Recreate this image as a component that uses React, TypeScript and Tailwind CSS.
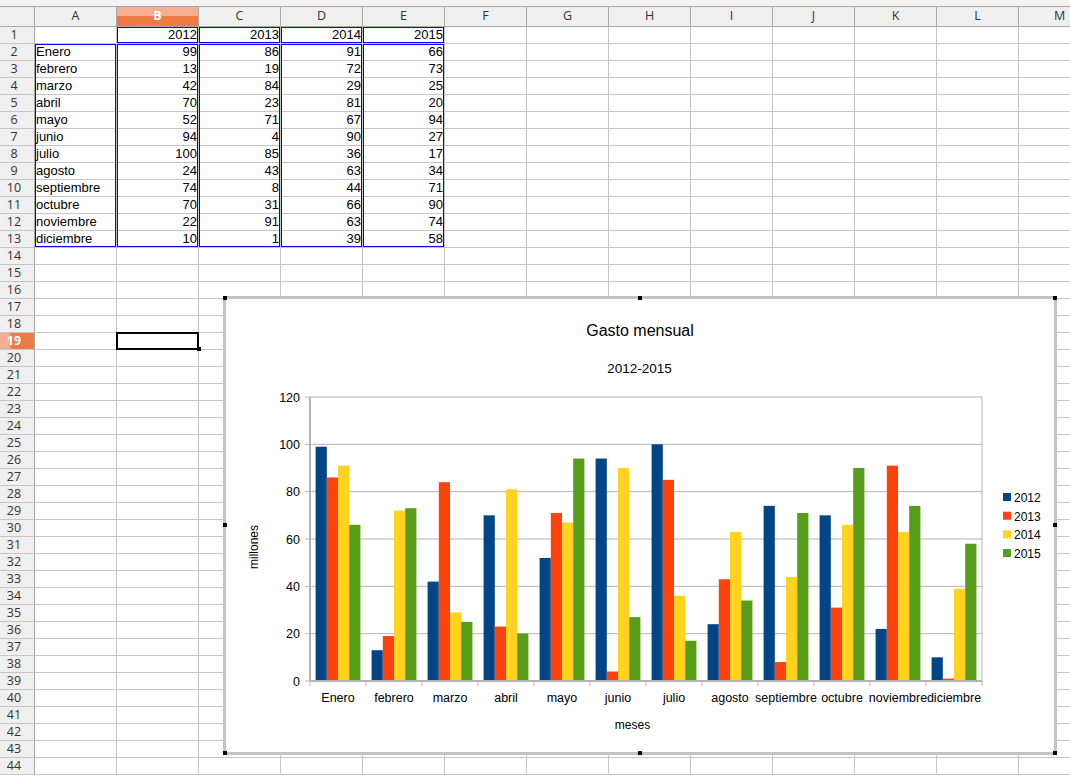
import React from 'react';

const COLS = ['A', 'B', 'C', 'D', 'E', 'F', 'G', 'H', 'I', 'J', 'K', 'L', 'M'];
const MONTHS = ['Enero', 'febrero', 'marzo', 'abril', 'mayo', 'junio', 'julio', 'agosto', 'septiembre', 'octubre', 'noviembre', 'diciembre'];
const DATA = [
  [99, 86, 91, 66],
  [13, 19, 72, 73],
  [42, 84, 29, 25],
  [70, 23, 81, 20],
  [52, 71, 67, 94],
  [94, 4, 90, 27],
  [100, 85, 36, 17],
  [24, 43, 63, 34],
  [74, 8, 44, 71],
  [70, 31, 66, 90],
  [22, 91, 63, 74],
  [10, 1, 39, 58],
];
const YEARS = ['2012', '2013', '2014', '2015'];
const COLORS = ['#004586', '#ff420e', '#ffd320', '#579d1c'];
const ROWS = Array.from({ length: 44 }, (_, i) => i + 1);

function cellContent(r: number, c: number): { text: string; right: boolean } | null {
  if (r === 1) {
    if (c >= 1 && c <= 4) return { text: YEARS[c - 1], right: true };
    return null;
  }
  if (r >= 2 && r <= 13) {
    if (c === 0) return { text: MONTHS[r - 2], right: false };
    if (c <= 4) return { text: String(DATA[r - 2][c - 1]), right: true };
  }
  return null;
}

const X0 = 310;
const X1 = 982;
const YTOP = 397;
const YBASE = 681;
const CAT = 56;
const BAR = 11.2;
const yv = (v: number) => YBASE - (v * (YBASE - YTOP)) / 120;

function Chart() {
  const grid = [20, 40, 60, 80, 100, 120];
  const labels = [0, 20, 40, 60, 80, 100, 120];
  return (
    <svg
      className="block font-['Liberation_Sans',Arial,sans-serif]"
      width={828}
      height={453}
      viewBox="226 299 828 453"
    >
      <text x={640} y={336} textAnchor="middle" fontSize={16} fill="#000">
        Gasto mensual
      </text>
      <text x={639.5} y={373} textAnchor="middle" fontSize={13.5} fill="#000">
        2012-2015
      </text>

      {grid.map((v) => (
        <line key={v} x1={X0} x2={X1} y1={yv(v)} y2={yv(v)} stroke="#b3b3b3" strokeWidth={1} />
      ))}
      {labels.map((v) => (
        <line key={'t' + v} x1={305} x2={X0} y1={yv(v)} y2={yv(v)} stroke="#b3b3b3" strokeWidth={1} />
      ))}
      {Array.from({ length: 13 }, (_, i) => (
        <line key={'xt' + i} x1={X0 + CAT * i} x2={X0 + CAT * i} y1={YBASE} y2={686} stroke="#b3b3b3" strokeWidth={1} />
      ))}

      {DATA.map((row, i) =>
        row.map((v, j) => (
          <rect
            key={i + '-' + j}
            x={X0 + CAT * i + BAR / 2 + BAR * j}
            y={yv(v)}
            width={BAR}
            height={YBASE - yv(v)}
            fill={COLORS[j]}
          />
        ))
      )}

      <line x1={X0} x2={X0} y1={YTOP} y2={YBASE} stroke="#b3b3b3" strokeWidth={2} />
      <line x1={X1} x2={X1} y1={YTOP} y2={YBASE} stroke="#b3b3b3" strokeWidth={1} />
      <line x1={X0} x2={X1} y1={YBASE} y2={YBASE} stroke="#b3b3b3" strokeWidth={2} />

      {labels.map((v) => (
        <text key={'l' + v} x={300} y={yv(v) + 4.5} textAnchor="end" fontSize={12.5} fill="#000">
          {v}
        </text>
      ))}
      {MONTHS.map((m, i) => (
        <text key={m} x={X0 + CAT * i + CAT / 2} y={702} textAnchor="middle" fontSize={12.5} fill="#000">
          {m}
        </text>
      ))}

      <text x={258} y={547} textAnchor="middle" fontSize={12} fill="#000" transform="rotate(-90 258 547)">
        millones
      </text>
      <text x={632.5} y={729} textAnchor="middle" fontSize={12} fill="#000">
        meses
      </text>

      {YEARS.map((y, i) => {
        const top = 493 + i * 18.7;
        return (
          <g key={y}>
            <rect x={1003} y={top} width={8} height={8} fill={COLORS[i]} />
            <text x={1014} y={top + 9} fontSize={12} fill="#000">
              {y}
            </text>
          </g>
        );
      })}
    </svg>
  );
}

function Handle({ x, y }: { x: string; y: string }) {
  return <div className={`absolute h-[4px] w-[4px] bg-black ${x} ${y}`} />;
}

export default function App() {
  return (
    <div className="relative h-[777px] w-[1070px] overflow-hidden bg-white font-['Liberation_Sans',Arial,sans-serif]">
      <div className="h-[6px] bg-[#f4f3f2]" />

      {/* column header */}
      <div className="flex h-[21px] border-y border-[#a9a9a9] bg-[#efefef] font-['Open_Sans',sans-serif] text-[12.5px] text-[#333]">
        <div className="w-[35px] shrink-0 border-r border-[#a9a9a9]" />
        {COLS.map((c) => (
          <div
            key={c}
            className={
              c === 'B'
                ? 'flex w-[82px] shrink-0 items-center justify-center border-r border-[#a9a9a9] bg-linear-to-b from-[#f6ae91] from-45% to-[#ee7a45] to-50% font-bold text-white'
                : 'flex w-[82px] shrink-0 items-center justify-center border-r border-[#a9a9a9]'
            }
          >
            {c}
          </div>
        ))}
      </div>

      {/* rows */}
      {ROWS.map((r) => (
        <div key={r} className="flex h-[17px]">
          <div
            className={
              r === 19
                ? 'w-[35px] shrink-0 border-b border-r border-b-[#c6c6c6] border-r-[#a9a9a9] bg-linear-to-r from-[#f6ae91] from-25% to-[#ee7a45] to-35% pr-[6px] text-center font-["Open_Sans",sans-serif] text-[12.5px] font-bold leading-[16px] text-white'
                : 'w-[35px] shrink-0 border-b border-r border-b-[#c6c6c6] border-r-[#a9a9a9] bg-[#efefef] pr-[6px] text-center font-["Open_Sans",sans-serif] text-[12.5px] leading-[16px] text-[#333]'
            }
          >
            {r}
          </div>
          {COLS.map((c, ci) => {
            const cc = cellContent(r, ci);
            return (
              <div
                key={c}
                className={
                  cc && cc.right
                    ? 'w-[82px] shrink-0 overflow-hidden whitespace-nowrap border-b border-r border-[#c6c6c6] pr-[1px] text-right text-[13px] leading-[16px] text-black'
                    : 'w-[82px] shrink-0 overflow-hidden whitespace-nowrap border-b border-r border-[#c6c6c6] pl-[1px] text-left text-[13px] leading-[16px] text-black'
                }
              >
                {cc ? cc.text : ''}
              </div>
            );
          })}
        </div>
      ))}

      {/* chart data range highlights (overlay) */}
      <div className="absolute left-[35px] top-[44px] h-[203px] w-[81px] border border-[#0000ff]" />
      <div className="absolute left-[117px] top-[27px] flex gap-[1px]">
        {[0, 1, 2, 3].map((k) => (
          <div key={k} className="flex w-[81px] flex-col gap-[1px]">
            <div className="h-[16px] border border-[#0000ff]" />
            <div className="h-[203px] border border-[#0000ff]" />
          </div>
        ))}
      </div>

      {/* active cell B19 */}
      <div className="absolute left-[116px] top-[332px] h-[18px] w-[83px] border-2 border-black" />
      <div className="absolute left-[197px] top-[347px] h-[4px] w-[4px] bg-black" />

      {/* chart object */}
      <div className="absolute left-[223px] top-[296px] h-[459px] w-[834px] border-[3px] border-[#c3c3c3] bg-white">
        <Chart />
      </div>
      <Handle x="left-[223px]" y="top-[296px]" />
      <Handle x="left-[638px]" y="top-[296px]" />
      <Handle x="left-[1053px]" y="top-[296px]" />
      <Handle x="left-[223px]" y="top-[523px]" />
      <Handle x="left-[1053px]" y="top-[523px]" />
      <Handle x="left-[223px]" y="top-[751px]" />
      <Handle x="left-[638px]" y="top-[751px]" />
      <Handle x="left-[1053px]" y="top-[751px]" />
    </div>
  );
}
